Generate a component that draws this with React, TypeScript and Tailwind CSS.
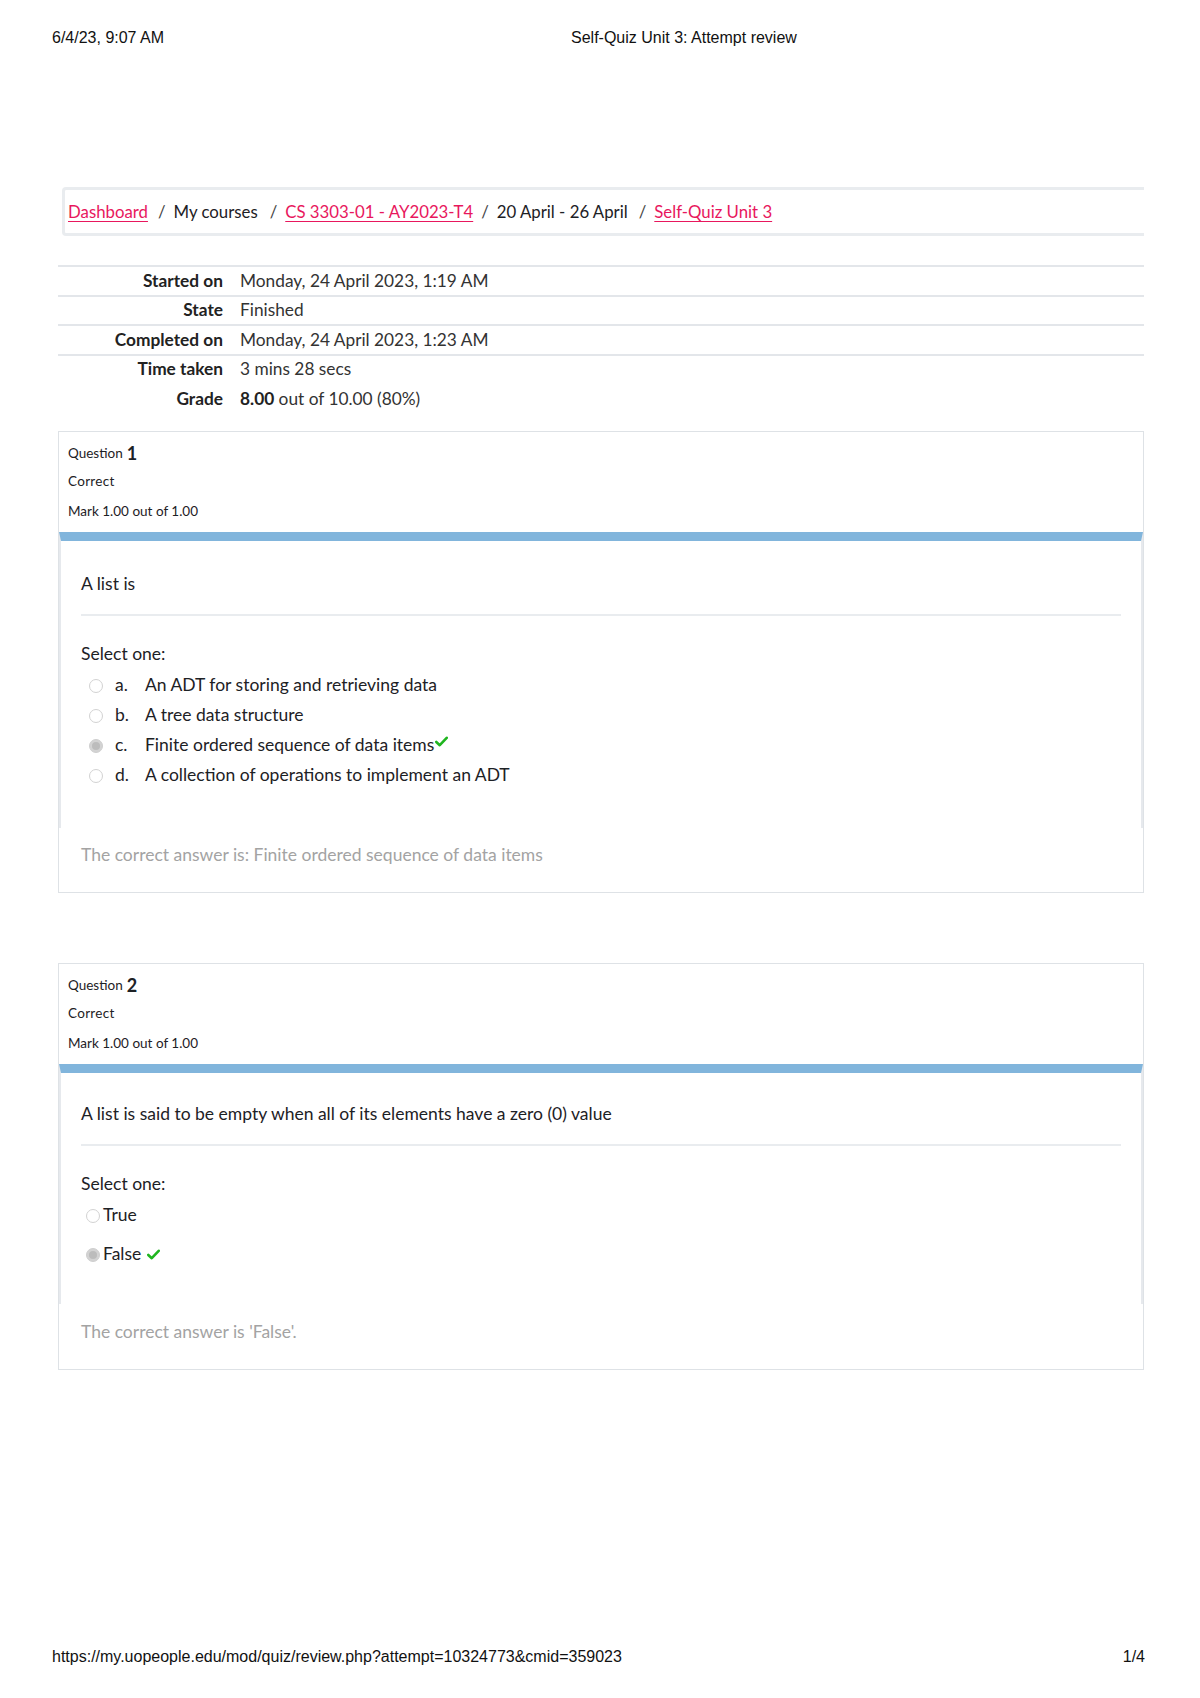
import React from 'react'

const body = { fontFamily: 'Lato, "Noto Sans", sans-serif' }
const print = { fontFamily: '"Liberation Sans", Arial, sans-serif' }

const Check = ({ className = '' }: { className?: string }) => (
  <svg viewBox="0 0 12 10" className={className} width="13" height="11">
    <path d="M1.2 5.4 L4.4 8.4 L10.8 1.6" fill="none" stroke="#1fb51f" strokeWidth="2.4" strokeLinecap="round" strokeLinejoin="round" />
  </svg>
)

const Radio = ({ checked }: { checked?: boolean }) =>
  checked ? (
    <span className="inline-flex w-[14px] h-[14px] rounded-full bg-[#d3d3d3] border border-[#cfcfcf] items-center justify-center shrink-0">
      <span className="w-[8px] h-[8px] rounded-full bg-[#bcbcbc]" />
    </span>
  ) : (
    <span className="inline-block w-[14px] h-[14px] rounded-full bg-white border border-[#d2d2d2] shrink-0" />
  )

const summary = [
  { label: 'Started on', value: 'Monday, 24 April 2023, 1:19 AM' },
  { label: 'State', value: 'Finished' },
  { label: 'Completed on', value: 'Monday, 24 April 2023, 1:23 AM' },
  { label: 'Time taken', value: '3 mins 28 secs' },
]

const QuestionHeader = ({ n }: { n: number }) => (
  <div className="h-[100px] pl-[9px] pt-[10px] text-[13.5px] text-[#1d2125]">
    <div className="h-[22px] flex items-end">
      <span>Question</span>
      <span className="ml-[4px] text-[18px] font-bold leading-[22px]">{n}</span>
    </div>
    <div className="h-[20px] mt-[8px] flex items-center tracking-[0.3px]">Correct</div>
    <div className="h-[20px] mt-[10px] flex items-center">Mark 1.00 out of 1.00</div>
  </div>
)

export default function App() {
  const options = [
    { l: 'a.', t: 'An ADT for storing and retrieving data' },
    { l: 'b.', t: 'A tree data structure' },
    { l: 'c.', t: 'Finite ordered sequence of data items', checked: true },
    { l: 'd.', t: 'A collection of operations to implement an ADT' },
  ]

  return (
    <div className="w-[1200px] h-[1698px] bg-white flex flex-col text-[#1d2125]" style={body}>
      {/* print header */}
      <div className="flex pt-[29px] pl-[52px] text-[16px] leading-[18px] text-[#111]" style={print}>
        <span className="w-[519px]">6/4/23, 9:07 AM</span>
        <span>Self-Quiz Unit 3: Attempt review</span>
      </div>

      <div className="ml-[58px] w-[1086px] mt-[140px]">
        {/* breadcrumb */}
        <div className="ml-[4px] h-[49px] border-[3px] border-r-0 border-[#e9ecef] rounded-l-[4px] flex items-center pl-[3px] text-[16.8px]">
          <a className="text-[#e8175d] underline underline-offset-[3px]">Dashboard</a>
          <span className="mx-[8px] ml-[10px] text-[#444]">/</span>
          <span>My courses</span>
          <span className="mx-[8px] ml-[12px] text-[#444]">/</span>
          <a className="text-[#e8175d] underline underline-offset-[3px]">CS 3303-01 - AY2023-T4</a>
          <span className="mx-[8px] text-[#444]">/</span>
          <span>20 April - 26 April</span>
          <span className="mx-[8px] ml-[11px] text-[#444]">/</span>
          <a className="text-[#e8175d] underline underline-offset-[3px]">Self-Quiz Unit 3</a>
        </div>

        {/* summary table */}
        <div className="mt-[29px] text-[17.3px]">
          {summary.map((r) => (
            <div key={r.label} className="h-[29.5px] border-t-2 border-[#e3e6ea] flex items-center">
              <span className="w-[165px] text-right font-bold text-[#222]">{r.label}</span>
              <span className="ml-[17px] text-[#333]">{r.value}</span>
            </div>
          ))}
          <div className="h-[29.5px] border-t-2 border-transparent flex items-center">
            <span className="w-[165px] text-right font-bold text-[#222]">Grade</span>
            <span className="ml-[17px] text-[#333]">
              <b className="text-[#222]">8.00</b> out of 10.00 (80%)
            </span>
          </div>
        </div>

        {/* question 1 */}
        <div className="mt-[18px] border border-[#dee2e6]">
          <QuestionHeader n={1} />
          <div className="border-t-[9px] border-t-[#81b5dc] border-x-2 border-x-[#e6e9ed] px-[20px] pb-[37px] text-[17.5px]">
            <div className="h-[20px] mt-[34px] flex items-center">A list is</div>
            <div className="mt-[19.5px] border-t-2 border-[#e9ecef]" />
            <div className="h-[20px] mt-[28px] flex items-center">Select one:</div>
            <div className="mt-[6.5px]">
              {options.map((o) => (
                <div key={o.l} className="h-[30px] flex items-center">
                  <span className="ml-[8px] flex"><Radio checked={o.checked} /></span>
                  <span className="ml-[12px] w-[30px]">{o.l}</span>
                  <span>{o.t}</span>
                  {o.checked && <Check className="ml-[1px] -mt-[8px]" />}
                </div>
              ))}
            </div>
          </div>
          <div className="pt-[18px] pb-[26px] px-[22px] text-[17.5px] text-[#a3a3a3]">
            <div className="h-[20px] flex items-center">The correct answer is: Finite ordered sequence of data items</div>
          </div>
        </div>

        {/* question 2 */}
        <div className="mt-[70px] border border-[#dee2e6]">
          <QuestionHeader n={2} />
          <div className="border-t-[9px] border-t-[#81b5dc] border-x-2 border-x-[#e6e9ed] px-[20px] pb-[29.5px] text-[17.5px]">
            <div className="h-[20px] mt-[31.5px] flex items-center">A list is said to be empty when all of its elements have a zero (0) value</div>
            <div className="mt-[19.5px] border-t-2 border-[#e9ecef]" />
            <div className="h-[20px] mt-[29px] flex items-center">Select one:</div>
            <div className="mt-[1.5px]">
              <div className="h-[39px] flex items-center">
                <span className="ml-[5px] flex"><Radio /></span>
                <span className="ml-[3px]">True</span>
              </div>
              <div className="h-[39px] flex items-center">
                <span className="ml-[5px] flex"><Radio checked /></span>
                <span className="ml-[3px]">False</span>
                <Check className="ml-[6px]" />
              </div>
            </div>
          </div>
          <div className="pt-[19px] pb-[26px] px-[22px] text-[17.5px] text-[#a3a3a3]">
            <div className="h-[20px] flex items-center">The correct answer is 'False'.</div>
          </div>
        </div>
      </div>

      {/* print footer */}
      <div className="mt-auto pb-[32px] pl-[52px] pr-[55px] flex justify-between text-[16px] leading-[18px] text-[#111]" style={print}>
        <span>https://my.uopeople.edu/mod/quiz/review.php?attempt=10324773&amp;cmid=359023</span>
        <span>1/4</span>
      </div>
    </div>
  )
}
